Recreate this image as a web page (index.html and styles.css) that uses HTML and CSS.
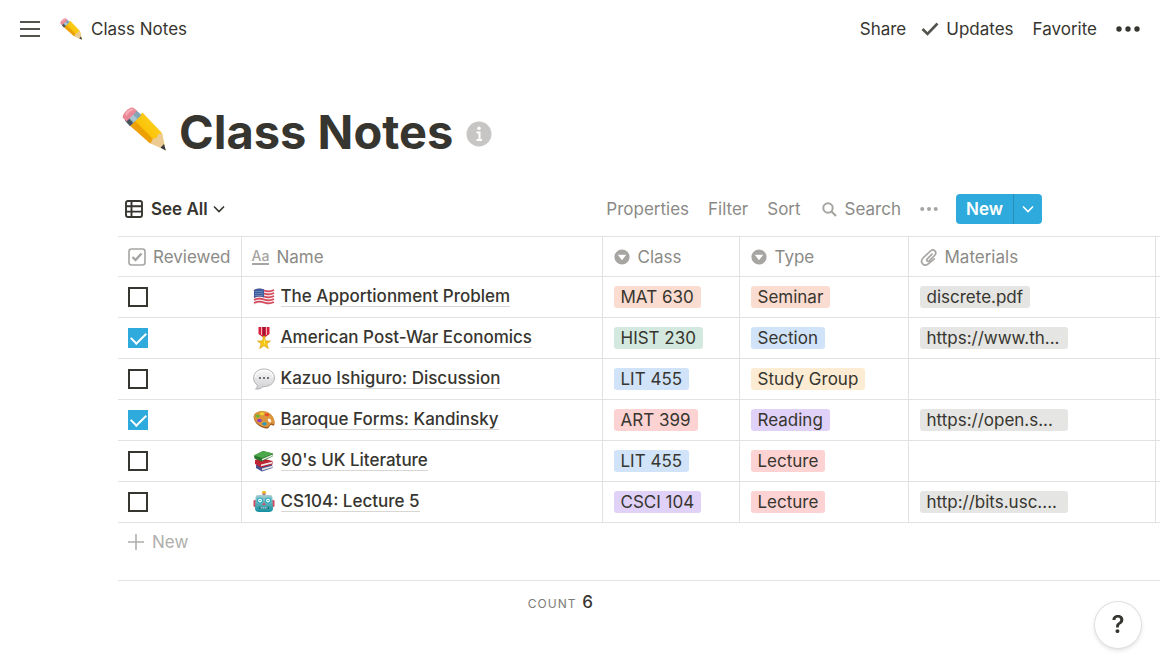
FILE: index.html
```html
<!DOCTYPE html>
<html lang="en">
<head>
<meta charset="utf-8">
<meta name="viewport" content="width=device-width, initial-scale=1">
<title>Class Notes</title>
<link rel="stylesheet" href="styles.css">
</head>
<body>
<svg class="sprite" aria-hidden="true">
  <defs>
    <linearGradient id="wood" x1="0" y1="1" x2="1" y2="0"><stop offset="0" stop-color="#f0a500"/><stop offset=".5" stop-color="#fbc60b"/><stop offset="1" stop-color="#ffd93a"/></linearGradient>
    <linearGradient id="bubble" x1="0" y1="0" x2="0" y2="1"><stop offset="0" stop-color="#fafafa"/><stop offset="1" stop-color="#cfcfd2"/></linearGradient>
    <linearGradient id="metal" x1="0" y1="0" x2="0" y2="1"><stop offset="0" stop-color="#a5cdd0"/><stop offset="1" stop-color="#168fa0"/></linearGradient>
    <symbol id="pencil" viewBox="0 0 44 44">
      <path d="M11.500 14.500 20.500 5.500 40 26 43.500 43 26.500 35Z" fill="url(#wood)"/>
      <path d="M6.500 16 11 19.500 29.500 37.500 26.500 35 6.500 16Z" fill="#c47c00"/>
      <path d="M7 18 12 13 32 33 28.500 36.500Z" fill="#eda003"/>
      <path d="M28.500 36.500 31 31.500 34.500 31 36 27.500 40 26 43.500 43Z" fill="#eccb92"/>
      <path d="M38.500 40.800 42 37 43.800 43.500Z" fill="#383b42"/>
      <path d="M3 13.500 13.500 2.500 19.500 8 8 19Z" fill="#83a5b8"/>
      <path d="M3 13.500 6 10.500 11 16 8 19Z" fill="#45515c"/>
      <path d="M6.500 10 10 6.500 15.500 12 12 15Z" fill="#aac5d2"/>
      <path d="M1 11C-1 8 7-.5 11 .6L15 4 4.500 14.500Z" fill="#e98796"/>
      <path d="M3 7Q6 2 10 1.500L12 3Q7 4 4.500 9Z" fill="#f6adb5"/>
    </symbol>
    <symbol id="flag" viewBox="0 0 22 22">
      <path d="M1 4Q6 1.500 11 3.500T21 3V17Q16 20 11 18T1 19Z" fill="#f2edf0"/>
      <path d="M1 5Q6 2.500 11 4.500T21 4M1 8Q6 5.500 11 7.500T21 7M1 11Q6 8.500 11 10.500T21 10M1 14Q6 11.500 11 13.500T21 13M1 17Q6 14.500 11 16.500T21 16" fill="none" stroke="#d6485a" stroke-width="1.700"/>
      <path d="M1 4Q6 1.500 11 3.500V11.500Q6 9.500 1 12Z" fill="#3c5c9d"/>
      <path d="M2.500 5.500H10M2.500 7.500H10M2.500 9.500H10" stroke="#a9bddd" stroke-width=".8" stroke-dasharray="1 1"/>
    </symbol>
    <symbol id="medal" viewBox="0 0 22 22">
      <path d="M5.500 0H16.500V7L11 11 5.500 7Z" fill="#d81e3d"/>
      <path d="M8.500 0V8M13.500 0V8" stroke="#f3b7bb"/><path d="M11 0V10" stroke="#8b1738" stroke-width="1.600"/>
      <circle cx="11" cy="10" r="1.500" fill="#dfa51b"/>
      <path d="M11 9.500 12.800 14H17.500L13.900 16.700 15.300 21.600 11 18.800 6.700 21.600 8.100 16.700 4.500 14H9.200Z" fill="#f7c717" stroke="#dda313" stroke-width=".7"/>
      <path d="M11 11 12 15 11 18Z" fill="#fff081"/>
    </symbol>
    <symbol id="speech" viewBox="0 0 22 22">
      <path d="M11 1C17.500 1 21.500 5 21.500 10S17 18.700 10 18.700C8 20.700 5.500 21.400 2.500 21 4 20 4.500 19 4.300 17 2 15.500.6 13 .6 10 .6 5 5 1 11 1Z" fill="url(#bubble)" stroke="#a5a5a8" stroke-width=".8"/>
      <path d="M2 9C3 4 7 2.500 11 2.500S19 4 20 9" fill="none" stroke="#fff"/>
      <circle cx="7" cy="10" r="1" fill="#4b4b4e"/><circle cx="11" cy="10" r="1" fill="#4b4b4e"/><circle cx="15" cy="10" r="1" fill="#4b4b4e"/>
    </symbol>
    <symbol id="palette" viewBox="0 0 22 22">
      <path d="M1 10C-1 4 7 1 13 3S22 10 21.500 15C21 18 19.500 16 18 16S16.500 20 13 19.500C7 19 2 14 1 10Z" fill="#9e5e24"/>
      <path d="M1 9C-.5 3.500 7 .8 13 2.500S22 10 21.300 14C20.500 16.500 19.500 14 18 14.500S16.500 18.500 13 18C7 17.500 2 13 1 9Z" fill="#dc953d"/>
      <ellipse cx="16.500" cy="11.500" rx="1.500" ry="2.200" transform="rotate(-35 16.500 11.500)" fill="#fff8ec"/>
      <ellipse cx="4.500" cy="7" rx="2.200" ry="1.600" fill="#63b838"/><ellipse cx="9" cy="4.700" rx="2.200" ry="1.500" fill="#efd52d"/><ellipse cx="14" cy="5.800" rx="2.200" ry="1.500" fill="#e94b2a"/>
      <ellipse cx="6.500" cy="11.500" rx="2.300" ry="1.700" fill="#933bc0"/><ellipse cx="11.500" cy="14.800" rx="2.300" ry="1.600" fill="#249cc6"/>
    </symbol>
    <symbol id="books" viewBox="0 0 22 22">
      <path d="M3 15 8 12 19 14.500 19.500 18 9 21.500 3 18Z" fill="#48508f"/>
      <path d="M9 18.500 19 15.800V17.500L9 20.500Z" fill="#e8e5e5"/>
      <path d="M2 10 8 8 19.500 11V14.500L8 17.500 2 14Z" fill="#bd2434"/>
      <path d="M8 14.500 19 11.800V13.500L8 16.200Z" fill="#eeeae7"/>
      <path d="M1 5.500 10 1 20 3.500 19.500 6.500 8.500 11.500 1.500 8.500Z" fill="#27752e"/>
      <path d="M1 5.500 10 1 20 3.500 9.500 8Z" fill="#4ba94b"/>
      <path d="M9 9 19.500 4.500V6L9 10.500Z" fill="#f0efe9"/>
    </symbol>
    <symbol id="robot" viewBox="0 0 22 22">
      <rect x="9" y="0" width="4" height="3" rx="1" fill="#f1bd2c"/><rect x="9.500" y="2.500" width="3" height="2" fill="#a56b86"/>
      <rect x=".5" y="9" width="3" height="7" rx="1.300" fill="#d6455c"/><rect x="18.500" y="9" width="3" height="7" rx="1.300" fill="#d6455c"/>
      <path d="M5 4H17Q19.500 4 19.500 7L20 18Q19.500 21 16 21H6Q2.500 21 2 18L2.500 7Q2.500 4 5 4Z" fill="url(#metal)"/>
      <circle cx="7" cy="9.500" r="3" fill="#25a8bd"/><circle cx="15" cy="9.500" r="3" fill="#25a8bd"/>
      <circle cx="7" cy="9.500" r="2" fill="#e9fdff"/><circle cx="15" cy="9.500" r="2" fill="#e9fdff"/>
      <circle cx="7" cy="9.500" r=".8" fill="#40adbd"/><circle cx="15" cy="9.500" r=".8" fill="#40adbd"/>
      <path d="M11 11 12.500 14H9.500Z" fill="#df485b"/>
      <path d="M6 15.500Q11 19 16 15.500V18H6Z" fill="#0c6d7d"/><path d="M7.500 17H14.500" stroke="#dce9e9" stroke-width="1.200" stroke-dasharray="1.500 .5"/>
    </symbol>
    <symbol id="chevron" viewBox="0 0 12 12"><path d="M1 3.500 6 8.500 11 3.500" fill="none" stroke="currentColor" stroke-width="1.600"/></symbol>
    <symbol id="select" viewBox="0 0 16 16"><path fill="currentColor" fill-rule="evenodd" d="M8 .4A7.600 7.600 0 1 1 8 15.600 7.600 7.600 0 0 1 8 .4ZM3.800 5.700 8 11.300 12.200 5.700Z"/></symbol>
    <symbol id="dots" viewBox="0 0 24 8"><circle cx="3" cy="4" r="2.700" fill="currentColor"/><circle cx="12" cy="4" r="2.700" fill="currentColor"/><circle cx="21" cy="4" r="2.700" fill="currentColor"/></symbol>
  </defs>
</svg>

<header class="topbar">
  <nav class="crumbs" aria-label="Breadcrumb">
    <button class="plain" aria-label="Menu"><svg class="menu-icon" viewBox="0 0 20 18"><path d="M0 2H20M0 9H20M0 16H20" stroke="currentColor" stroke-width="2"/></svg></button>
    <a class="crumb" href="#"><svg class="emoji"><use href="#pencil"/></svg>Class Notes</a>
  </nav>
  <div class="actions">
    <button class="plain">Share</button>
    <button class="plain updates"><svg class="tick-icon" viewBox="0 0 18 14"><path d="M1.500 7 6.500 12 16.500 1.500" fill="none" stroke="currentColor" stroke-width="2.600"/></svg>Updates</button>
    <button class="plain">Favorite</button>
    <button class="plain" aria-label="More"><svg class="more-icon"><use href="#dots"/></svg></button>
  </div>
</header>

<main class="page">
  <div class="heading">
    <svg class="title-icon"><use href="#pencil"/></svg>
    <h1>Class Notes</h1>
    <svg class="info-icon" viewBox="0 0 26 26"><circle cx="13" cy="13" r="12.500" fill="#c7c6c4"/><circle cx="13" cy="7.300" r="1.700" fill="#fff"/><path d="M10.500 11.500H13.500V19M10.500 19H16" fill="none" stroke="#fff" stroke-width="2"/></svg>
  </div>

  <div class="viewbar">
    <button class="plain view"><svg class="table-icon" viewBox="0 0 18 18"><path d="M3 1H15Q17 1 17 3V15Q17 17 15 17H3Q1 17 1 15V3Q1 1 3 1ZM1 6.300H17M1 11.600H17M6.500 1V17" fill="none" stroke="currentColor" stroke-width="1.900"/></svg>See All<svg class="chevron"><use href="#chevron"/></svg></button>
    <div class="tools">
      <button class="plain">Properties</button>
      <button class="plain">Filter</button>
      <button class="plain">Sort</button>
      <button class="plain search"><svg class="search-icon" viewBox="0 0 15 15"><circle cx="6" cy="6" r="4.700" fill="none" stroke="currentColor" stroke-width="2"/><path d="M9.300 9.300 14 14" stroke="currentColor" stroke-width="2.200"/></svg>Search</button>
      <button class="plain" aria-label="View options"><svg class="dots-icon"><use href="#dots"/></svg></button>
      <div class="split"><button class="new">New</button><button class="new-menu" aria-label="New options"><svg class="chevron"><use href="#chevron"/></svg></button></div>
    </div>
  </div>

  <table class="notes">
    <colgroup><col class="c-reviewed"><col class="c-name"><col class="c-class"><col class="c-type"><col class="c-materials"><col></colgroup>
    <thead>
      <tr>
        <th><span class="label"><svg class="prop" viewBox="0 0 18 18"><rect x="1" y="1" width="16" height="16" rx="2.500" fill="none" stroke="currentColor" stroke-width="1.600"/><path d="M4.500 9 7.500 12 13.500 5.500" fill="none" stroke="currentColor" stroke-width="2.400"/></svg>Reviewed</span></th>
        <th><span class="label"><span class="aa" aria-hidden="true">Aa</span>Name</span></th>
        <th><span class="label select"><svg class="prop-select"><use href="#select"/></svg>Class</span></th>
        <th><span class="label select"><svg class="prop-select"><use href="#select"/></svg>Type</span></th>
        <th><span class="label"><svg class="prop" viewBox="0 0 18 18"><path d="M12.500 6.200 7.800 10.800C6.300 12.300 8.200 14.200 9.700 12.800L15 7.500C18.300 4 14 .2 11 3L4 9.500C-.8 14.300 4.500 19.300 8.800 15.800L14.800 10.800" transform="translate(-.5 0)" fill="none" stroke="currentColor" stroke-width="1.700" stroke-linecap="round"/></svg>Materials</span></th>
        <th></th>
      </tr>
    </thead>
    <tbody>
      <tr><td><input type="checkbox" aria-label="The Apportionment Problem reviewed"></td><td><div class="title"><svg class="emoji"><use href="#flag"/></svg><a href="#">The Apportionment Problem</a></div></td><td><span class="tag orange">MAT 630</span></td><td><span class="tag orange">Seminar</span></td><td><span class="tag gray">discrete.pdf</span></td><td></td></tr>
      <tr><td><input type="checkbox" checked aria-label="American Post-War Economics reviewed"></td><td><div class="title"><svg class="emoji"><use href="#medal"/></svg><a href="#">American Post-War Economics</a></div></td><td><span class="tag green">HIST 230</span></td><td><span class="tag blue">Section</span></td><td><span class="tag gray url">https://www.th...</span></td><td></td></tr>
      <tr><td><input type="checkbox" aria-label="Kazuo Ishiguro: Discussion reviewed"></td><td><div class="title"><svg class="emoji"><use href="#speech"/></svg><a href="#">Kazuo Ishiguro: Discussion</a></div></td><td><span class="tag blue">LIT 455</span></td><td><span class="tag yellow">Study Group</span></td><td></td><td></td></tr>
      <tr><td><input type="checkbox" checked aria-label="Baroque Forms: Kandinsky reviewed"></td><td><div class="title"><svg class="emoji"><use href="#palette"/></svg><a href="#">Baroque Forms: Kandinsky</a></div></td><td><span class="tag red">ART 399</span></td><td><span class="tag purple">Reading</span></td><td><span class="tag gray url">https://open.s...</span></td><td></td></tr>
      <tr><td><input type="checkbox" aria-label="90's UK Literature reviewed"></td><td><div class="title"><svg class="emoji"><use href="#books"/></svg><a href="#">90's UK Literature</a></div></td><td><span class="tag blue">LIT 455</span></td><td><span class="tag red">Lecture</span></td><td></td><td></td></tr>
      <tr><td><input type="checkbox" aria-label="CS104: Lecture 5 reviewed"></td><td><div class="title"><svg class="emoji"><use href="#robot"/></svg><a href="#">CS104: Lecture 5</a></div></td><td><span class="tag purple">CSCI 104</span></td><td><span class="tag red">Lecture</span></td><td><span class="tag gray url">http://bits.usc....</span></td><td></td></tr>
    </tbody>
    <tfoot>
      <tr class="add"><td colspan="6"><button class="plain add-row"><svg class="plus-icon" viewBox="0 0 16 16"><path d="M8 0V16M0 8H16" stroke="currentColor" stroke-width="1.600"/></svg>New</button></td></tr>
      <tr class="totals"><td colspan="2"><span class="count">COUNT</span> <span class="total">6</span></td><td colspan="4"></td></tr>
    </tfoot>
  </table>
</main>
<button class="help" aria-label="Help">?</button>
</body>
</html>
```
FILE: styles.css
```css
* { box-sizing: border-box; }

body {
  margin: 0;
  background: #fff;
  color: #37352f;
  font: 17px/24px Inter, "Liberation Sans", sans-serif;
}

svg { display: block; flex: none; }
.sprite { position: absolute; width: 0; height: 0; }
button { font: inherit; color: inherit; cursor: pointer; }
a { color: inherit; text-decoration: none; }

.plain {
  display: flex;
  align-items: center;
  padding: 0;
  border: 0;
  background: none;
}

.topbar {
  display: flex;
  align-items: center;
  justify-content: space-between;
  height: 57px;
  padding: 0 20px;
}
.crumbs, .actions, .crumb { display: flex; align-items: center; }
.crumbs { gap: 20px; }
.crumb { gap: 9px; }
.actions { gap: 19px; }
.updates { gap: 7px; margin-left: -4px; }
.menu-icon { width: 20px; height: 18px; color: #55534e; }
.tick-icon { width: 18px; height: 14px; color: #55534e; }
.more-icon { width: 24px; height: 8px; }
.emoji { width: 22px; height: 22px; }

.page { padding-left: 118px; }

.heading {
  display: flex;
  align-items: center;
  padding: 43px 0 0 4px;
}
.title-icon { width: 44px; height: 44px; margin-bottom: 6px; }
h1 {
  margin: 0 13px;
  font-size: 47px;
  line-height: 64px;
  font-weight: 700;
}
.info-icon { width: 26px; height: 26px; margin-top: 4px; }

.viewbar {
  display: flex;
  align-items: center;
  justify-content: space-between;
  height: 30px;
  margin: 30px 118px 12px 7px;
}
.view { font-weight: 600; }
.table-icon { width: 18px; height: 18px; margin-right: 8px; }
.chevron { width: 12px; height: 12px; }
.view .chevron { margin-left: 5px; }
.tools { display: flex; align-items: center; gap: 19px; color: #8b8a86; }
.search { gap: 8px; }
.search-icon { width: 15px; height: 15px; margin-left: 2px; color: #a6a5a2; }
.dots-icon { width: 18px; height: 6px; color: #a6a5a2; }
.split {
  display: flex;
  overflow: hidden;
  margin-left: -1px;
  border-radius: 4px;
  background: #2eaadc;
  color: #fff;
}
.new, .new-menu { height: 30px; border: 0; background: none; }
.new { padding: 0 10px; font-weight: 600; }
.new-menu {
  display: grid;
  place-items: center;
  width: 29px;
  padding: 0;
  border-left: 1px solid #258fba;
}

.notes {
  width: 100%;
  border-collapse: collapse;
  table-layout: fixed;
}
.c-reviewed { width: 123px; }
.c-name { width: 361px; }
.c-class { width: 137px; }
.c-type { width: 169px; }
.c-materials { width: 247px; }
th, td {
  height: 41px;
  padding: 0 10px;
  border: 1px solid #e3e2e0;
  text-align: left;
  vertical-align: middle;
}
th { height: 40px; color: #8b8a86; font-weight: 400; }
th:nth-child(n+3), td:nth-child(n+3) { padding-left: 11px; }
th:first-child, td:first-child { border-left: 0; }
th:last-child, td:last-child { border-right: 0; padding: 0; }

.label { display: flex; align-items: center; gap: 7px; }
.select { gap: 8px; }
.prop, .prop-select { color: #a6a5a2; }
.prop { width: 18px; height: 18px; }
.prop-select { width: 16px; height: 16px; }
.aa {
  border-bottom: 2px solid #a6a5a2;
  color: #a6a5a2;
  font-size: 14px;
  line-height: 14px;
  font-weight: 500;
}

input[type="checkbox"] {
  display: grid;
  place-items: center;
  width: 20px;
  height: 20px;
  margin: 0;
  appearance: none;
  border: 2px solid #37352f;
  background: #fff;
}
input[type="checkbox"]:checked { border-color: #2eaadc; background: #2eaadc; }
input[type="checkbox"]:checked::before {
  content: "";
  width: 13px;
  height: 7px;
  margin-bottom: 4px;
  border: solid #fff;
  border-width: 0 0 2px 2px;
  transform: rotate(-45deg);
}

.title { display: flex; align-items: center; gap: 6px; padding-left: 1px; }
.title a {
  border-bottom: 1px solid #d8d7d4;
  line-height: 19px;
  font-weight: 500;
}

.tag {
  display: block;
  width: fit-content;
  padding: 0 7px;
  border-radius: 3px;
  line-height: 22px;
  white-space: nowrap;
}
.url { width: 148px; }
.orange { background: #fbdcd0; }
.green { background: #d3e8de; }
.blue { background: #d0e3f8; }
.yellow { background: #fbecd3; }
.red { background: #fcd2d2; }
.purple { background: #dfd1f8; }
.gray { background: #e5e5e3; }

.notes .add td { height: 58px; padding: 7px 0 0 10px; vertical-align: top; }
.plus-icon { width: 16px; height: 16px; }
.add-row { gap: 8px; color: #b0afac; }
.totals td { padding: 4px 9px 0; border-width: 1px 0 0; text-align: right; }
.count { margin-right: 1px; color: #7d7b77; font-size: 12px; letter-spacing: 1px; }
.total { font-weight: 500; }

.help {
  position: fixed;
  right: 19px;
  bottom: 18px;
  width: 46px;
  height: 46px;
  padding: 0;
  border: 0;
  border-radius: 50%;
  background: #fff;
  box-shadow: 0 0 0 1px #e1e0de, 0 2px 5px #00000026;
  font-size: 24px;
  font-weight: 600;
}
```
